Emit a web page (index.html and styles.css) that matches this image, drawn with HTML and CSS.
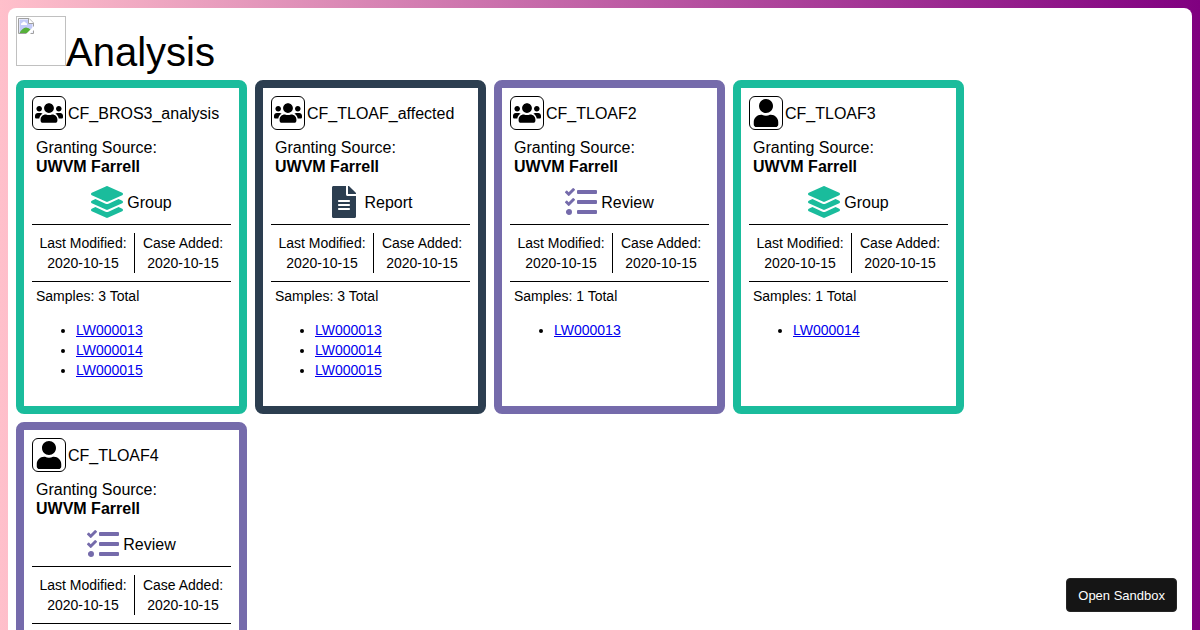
FILE: index.html
```html
<!DOCTYPE html>
<html lang="en">
	<head>
		<meta charset="utf-8">
		<title>Analysis</title>
		<link rel="stylesheet" href="styles.css">
	</head>
	<body>
		<!-- icon sprite -->
		<svg class="sprite" aria-hidden="true">
			<symbol id="users" viewBox="0 0 640 512"><path d="M96 224c35.3 0 64-28.7 64-64s-28.7-64-64-64-64 28.7-64 64 28.7 64 64 64zm448 0c35.3 0 64-28.7 64-64s-28.7-64-64-64-64 28.7-64 64 28.7 64 64 64zm32 32h-64c-17.6 0-33.5 7.1-45.1 18.6 40.3 22.1 68.9 62 75.1 109.4h66c17.7 0 32-14.3 32-32v-32c0-35.3-28.7-64-64-64zm-256 0c61.9 0 112-50.1 112-112S381.9 32 320 32 208 82.1 208 144s50.1 112 112 112zm76.8 32h-8.3c-20.8 10-43.9 16-68.5 16s-47.6-6-68.5-16h-8.3C179.6 288 128 339.6 128 403.2V432c0 26.5 21.5 48 48 48h288c26.5 0 48-21.5 48-48v-28.8c0-63.6-51.6-115.2-115.2-115.2zm-223.7-13.4C161.5 263.1 145.6 256 128 256H64c-35.3 0-64 28.7-64 64v32c0 17.7 14.3 32 32 32h65.9c6.3-47.4 34.9-87.3 75.2-109.4z"/></symbol>
			<symbol id="user" viewBox="0 0 448 512"><path d="M224 256c70.7 0 128-57.3 128-128S294.7 0 224 0 96 57.3 96 128s57.3 128 128 128zm89.6 32h-16.7c-22.2 10.2-46.9 16-72.9 16s-50.6-5.8-72.9-16h-16.7C60.2 288 0 348.2 0 422.4V464c0 26.5 21.5 48 48 48h352c26.5 0 48-21.5 48-48v-41.6c0-74.2-60.2-134.4-134.4-134.4z"/></symbol>
			<symbol id="layers" viewBox="0 0 512 512"><path d="M12.41 148.02l232.94 105.67c6.8 3.09 14.49 3.09 21.29 0l232.94-105.67c16.55-7.51 16.55-32.52 0-40.03L266.65 2.31a25.607 25.607 0 0 0-21.29 0L12.41 107.98c-16.55 7.51-16.55 32.53 0 40.04zm487.18 88.28l-58.09-26.33-161.64 73.27c-7.56 3.43-15.59 5.17-23.86 5.17s-16.29-1.74-23.86-5.17L70.51 209.97l-58.1 26.33c-16.55 7.5-16.55 32.5 0 40l232.94 105.59c6.8 3.08 14.49 3.08 21.29 0L499.59 276.3c16.55-7.5 16.55-32.5 0-40zm0 127.8l-57.87-26.23-161.86 73.37c-7.56 3.43-15.59 5.17-23.86 5.17s-16.29-1.74-23.86-5.17L70.29 337.87 12.41 364.1c-16.55 7.5-16.55 32.5 0 40l232.94 105.59c6.8 3.08 14.49 3.08 21.29 0L499.59 404.1c16.55-7.5 16.55-32.5 0-40z"/></symbol>
			<symbol id="file" viewBox="0 0 384 512"><path d="M224 136V0H24C10.7 0 0 10.7 0 24v464c0 13.3 10.7 24 24 24h336c13.3 0 24-10.7 24-24V160H248c-13.2 0-24-10.8-24-24zm64 236c0 6.6-5.4 12-12 12H108c-6.6 0-12-5.4-12-12v-8c0-6.6 5.4-12 12-12h168c6.6 0 12 5.4 12 12v8zm0-64c0 6.6-5.4 12-12 12H108c-6.6 0-12-5.4-12-12v-8c0-6.6 5.4-12 12-12h168c6.6 0 12 5.4 12 12v8zm0-72v8c0 6.6-5.4 12-12 12H108c-6.6 0-12-5.4-12-12v-8c0-6.6 5.4-12 12-12h168c6.6 0 12 5.4 12 12zm96-114.1v6.1H256V0h6.1c6.4 0 12.5 2.5 17 7l97.9 98c4.5 4.5 7 10.6 7 16.9z"/></symbol>
			<symbol id="tasks" viewBox="0 0 512 512"><path d="M139.61 35.5a12 12 0 0 0-17 0L58.93 98.81l-22.7-22.12a12 12 0 0 0-17 0L3.53 92.41a12 12 0 0 0 0 17l47.59 47.4a12.78 12.78 0 0 0 17.61 0l15.59-15.62L156.52 69a12.09 12.09 0 0 0 .09-17zm0 159.19a12 12 0 0 0-17 0l-63.68 63.72-22.7-22.1a12 12 0 0 0-17 0L3.53 252a12 12 0 0 0 0 17L51 316.5a12.77 12.77 0 0 0 17.6 0l15.7-15.69 72.2-72.22a12 12 0 0 0 .09-16.9zM64 368c-26.49 0-48.59 21.5-48.59 48S37.53 464 64 464a48 48 0 0 0 0-96zm432 16H208a16 16 0 0 0-16 16v32a16 16 0 0 0 16 16h288a16 16 0 0 0 16-16v-32a16 16 0 0 0-16-16zm0-320H208a16 16 0 0 0-16 16v32a16 16 0 0 0 16 16h288a16 16 0 0 0 16-16V80a16 16 0 0 0-16-16zm0 160H208a16 16 0 0 0-16 16v32a16 16 0 0 0 16 16h288a16 16 0 0 0 16-16v-32a16 16 0 0 0-16-16z"/></symbol>
		</svg>

		<main class="app">
			<header class="title">
				<span class="logo">
					<svg width="16" height="16" viewBox="0 0 16 16">
						<path d="M.5.5H11L15.500 5V15.500H.5z" fill="#fff" stroke="#a0a0a0"/>
						<path d="M1.500 1.500H10.500V5.500H14.500V14.500H1.500z" fill="#c3cbf8"/>
						<path d="M3 7q-.5-2 1.500-2.500q1.500-2 3 0q2 .5 1.500 2.500z" fill="#fff"/>
						<path d="M1.500 15Q4 10 8 9.500Q11 9.500 13 12V15z" fill="#56b03a"/>
						<path d="M10.500 .5V5.500H15.500" fill="#fff" stroke="#a0a0a0"/>
						<path d="M8 16L16 8V12L12 16z" fill="#fff"/>
					</svg>
				</span>
				<h1>Analysis</h1>
			</header>

			<div class="cards">
				<section class="card group">
					<div class="name"><svg class="who"><use href="#users"/></svg><span>CF_BROS3_analysis</span></div>
					<div class="source">Granting Source:<br><b>UWVM Farrell</b></div>
					<div class="type"><svg><use href="#layers"/></svg><span>Group</span></div>
					<div class="dates">
						<div>Last Modified:<br>2020-10-15</div>
						<div>Case Added:<br>2020-10-15</div>
					</div>
					<div class="samples">
						Samples: 3 Total
						<ul>
							<li><a href="#">LW000013</a></li>
							<li><a href="#">LW000014</a></li>
							<li><a href="#">LW000015</a></li>
						</ul>
					</div>
				</section>

				<section class="card report">
					<div class="name"><svg class="who"><use href="#users"/></svg><span>CF_TLOAF_affected</span></div>
					<div class="source">Granting Source:<br><b>UWVM Farrell</b></div>
					<div class="type"><svg><use href="#file"/></svg><span>Report</span></div>
					<div class="dates">
						<div>Last Modified:<br>2020-10-15</div>
						<div>Case Added:<br>2020-10-15</div>
					</div>
					<div class="samples">
						Samples: 3 Total
						<ul>
							<li><a href="#">LW000013</a></li>
							<li><a href="#">LW000014</a></li>
							<li><a href="#">LW000015</a></li>
						</ul>
					</div>
				</section>

				<section class="card review">
					<div class="name"><svg class="who"><use href="#users"/></svg><span>CF_TLOAF2</span></div>
					<div class="source">Granting Source:<br><b>UWVM Farrell</b></div>
					<div class="type"><svg><use href="#tasks"/></svg><span>Review</span></div>
					<div class="dates">
						<div>Last Modified:<br>2020-10-15</div>
						<div>Case Added:<br>2020-10-15</div>
					</div>
					<div class="samples">
						Samples: 1 Total
						<ul>
							<li><a href="#">LW000013</a></li>
						</ul>
					</div>
				</section>

				<section class="card group">
					<div class="name"><svg class="who"><use href="#user"/></svg><span>CF_TLOAF3</span></div>
					<div class="source">Granting Source:<br><b>UWVM Farrell</b></div>
					<div class="type"><svg><use href="#layers"/></svg><span>Group</span></div>
					<div class="dates">
						<div>Last Modified:<br>2020-10-15</div>
						<div>Case Added:<br>2020-10-15</div>
					</div>
					<div class="samples">
						Samples: 1 Total
						<ul>
							<li><a href="#">LW000014</a></li>
						</ul>
					</div>
				</section>

				<section class="card review">
					<div class="name"><svg class="who"><use href="#user"/></svg><span>CF_TLOAF4</span></div>
					<div class="source">Granting Source:<br><b>UWVM Farrell</b></div>
					<div class="type"><svg><use href="#tasks"/></svg><span>Review</span></div>
					<div class="dates">
						<div>Last Modified:<br>2020-10-15</div>
						<div>Case Added:<br>2020-10-15</div>
					</div>
				</section>
			</div>
		</main>

		<button class="sandbox" type="button">Open Sandbox</button>
	</body>
</html>
```
FILE: styles.css
```css
* {
	box-sizing: border-box;
}

body {
	margin: 0;
	padding: 8px;
	background: linear-gradient(to right, pink, purple);
	font-family: Helvetica, "Liberation Sans", sans-serif;
	font-size: 16px;
	line-height: 19px;
	color: #000;
}

.sprite {
	display: none;
}

.app {
	padding: 8px;
	background: #fff;
	border-radius: 8px;
}

/* page title */
.title {
	display: flex;
	align-items: flex-start;
	height: 64px;
}
.title h1 {
	margin: 12px 0 0;
	font-size: 40px;
	font-weight: normal;
	line-height: 48px;
}
.logo {
	width: 50px;
	height: 50px;
	padding: 1px;
	border: 1px solid silver;
}
.logo svg {
	display: block;
}

/* cards */
.cards {
	display: flex;
	flex-wrap: wrap;
	gap: 8px;
}
.card {
	width: 231px;
	min-height: 334px;
	padding: 8px;
	border: 8px solid;
	border-radius: 8px;
}
.group {
	border-color: #1abc9c;
	fill: #1abc9c;
}
.report {
	border-color: #2c3e50;
	fill: #2c3e50;
}
.review {
	border-color: #756bab;
	fill: #756bab;
}

.name {
	display: flex;
	align-items: center;
	gap: 2px;
}
.who {
	width: 34px;
	height: 34px;
	padding: 2px;
	border: 1px solid #000;
	border-radius: 6px;
	fill: #000;
}
.source {
	padding: 8px 4px 4px;
}
.type {
	display: flex;
	align-items: center;
	justify-content: center;
	gap: 4px;
	padding: 6px 0;
}
.type svg {
	width: 32px;
	height: 32px;
}
.dates {
	display: grid;
	grid-template-columns: 102px 1fr;
	padding: 8px 0;
	border-top: 1px solid #000;
	border-bottom: 1px solid #000;
	font-size: 14px;
	line-height: 20px;
	text-align: center;
	white-space: nowrap;
}
.dates div + div {
	border-left: 1px solid #000;
}
.samples {
	padding: 4px;
	font-size: 14px;
	line-height: 20px;
}
.samples ul {
	margin: 14px 0;
	padding-left: 40px;
}
.samples a {
	color: #0000ee;
}

/* floating button */
.sandbox {
	position: fixed;
	right: 23px;
	bottom: 18px;
	height: 34px;
	padding: 0 11px;
	border: 1px solid #252525;
	border-radius: 4px;
	background: #151515;
	color: #fff;
	font-family: "Liberation Sans", Arial, sans-serif;
	font-size: 13px;
}
```
